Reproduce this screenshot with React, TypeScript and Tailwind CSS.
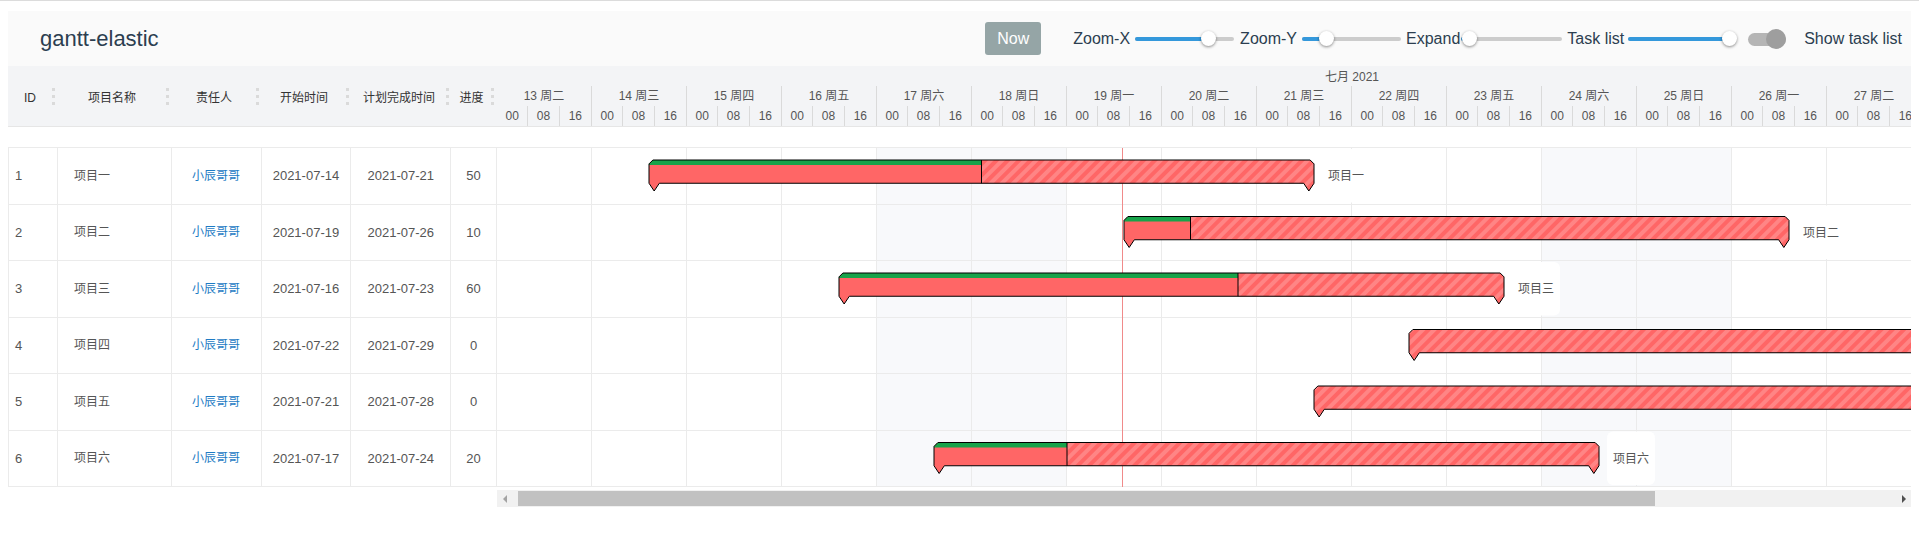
import React from 'react';

const DAY_W = 95;
const ROW_H = 56.5;
const BAR_W = 665;
const BAR_H = 31;
const VIEW_W = 1414;

const days = [
  { d: 13, w: '周二' },
  { d: 14, w: '周三' },
  { d: 15, w: '周四' },
  { d: 16, w: '周五' },
  { d: 17, w: '周六' },
  { d: 18, w: '周日' },
  { d: 19, w: '周一' },
  { d: 20, w: '周二' },
  { d: 21, w: '周三' },
  { d: 22, w: '周四' },
  { d: 23, w: '周五' },
  { d: 24, w: '周六' },
  { d: 25, w: '周日' },
  { d: 26, w: '周一' },
  { d: 27, w: '周二' },
];

const tasks = [
  { id: 1, name: '项目一', start: '2021-07-14', end: '2021-07-21', progress: 50 },
  { id: 2, name: '项目二', start: '2021-07-19', end: '2021-07-26', progress: 10 },
  { id: 3, name: '项目三', start: '2021-07-16', end: '2021-07-23', progress: 60 },
  { id: 4, name: '项目四', start: '2021-07-22', end: '2021-07-29', progress: 0 },
  { id: 5, name: '项目五', start: '2021-07-21', end: '2021-07-28', progress: 0 },
  { id: 6, name: '项目六', start: '2021-07-17', end: '2021-07-24', progress: 20 },
];

const barX = (start: string) => (Number(start.slice(8)) - 13) * DAY_W + 57;

function Slider({ width, value }: { width: number; value: number }) {
  return (
    <div className="relative h-[16px] shrink-0" style={{ width }}>
      <div className="absolute left-0 right-0 top-[6px] h-[4px] rounded-full bg-[#cccccc]" />
      <div className="absolute left-0 top-[6px] h-[4px] rounded-full bg-[#3498db]" style={{ width: value }} />
      <div
        className="absolute top-0 h-[15px] w-[15px] rounded-full bg-white shadow-[0_1px_3px_rgba(0,0,0,0.45)]"
        style={{ left: value - 7.5 }}
      />
    </div>
  );
}

function Resizer() {
  return (
    <div className="absolute right-[3px] top-[22px] flex flex-col gap-[4px]">
      <div className="h-[3px] w-[3px] bg-[#dadada]" />
      <div className="h-[3px] w-[3px] bg-[#dadada]" />
      <div className="h-[3px] w-[3px] bg-[#dadada]" />
    </div>
  );
}

const cols = [
  { label: 'ID', w: 'w-[50px]' },
  { label: '项目名称', w: 'w-[114px]' },
  { label: '责任人', w: 'w-[90px]' },
  { label: '开始时间', w: 'w-[90px]' },
  { label: '计划完成时间', w: 'w-[100px]' },
  { label: '进度', w: 'w-[45px]' },
];

function TaskBar({ x, y, progress }: { x: number; y: number; progress: number }) {
  const h = BAR_H;
  const w = BAR_W;
  const bottom = h * 0.75;
  const corner = h / 6;
  const small = h / 8;
  const d = `M ${small} 0 L ${w - small} 0 L ${w} ${small} L ${w} ${bottom} L ${w - corner} ${h} L ${w - corner * 2} ${bottom} L ${corner * 2} ${bottom} L ${corner} ${h} L 0 ${bottom} L 0 ${small} Z`;
  const pw = (w * progress) / 100;
  const clipId = `clip-${x}-${Math.round(y)}`;
  return (
    <g transform={`translate(${x} ${y})`}>
      <defs>
        <clipPath id={clipId}>
          <path d={d} />
        </clipPath>
      </defs>
      <g clipPath={`url(#${clipId})`}>
        <rect x={0} y={0} width={w} height={h} fill="#ff6666" />
        <rect x={pw} y={0} width={w - pw} height={h} fill="url(#hatch)" />
        {progress > 0 && <rect x={0} y={0} width={pw} height={5} fill="#17a34a" />}
      </g>
      {progress > 0 && <line x1={pw} y1={0} x2={pw} y2={bottom} stroke="#000" strokeWidth={1} />}
      <path d={d} fill="none" stroke="#000" strokeWidth={1} />
    </g>
  );
}

export default function App() {
  const chartH = ROW_H * tasks.length;
  return (
    <div className="relative h-[548px] w-[1919px] overflow-hidden bg-white font-['Liberation_Sans','Noto_Sans_CJK_SC',sans-serif]">
      <div className="h-px bg-[#dcdcdc]" />
      <div className="ml-2 mt-[10px] w-[1903px]">
        {/* top bar */}
        <div className="flex h-[55px] items-center bg-[#fafafa] pr-[9px] text-[16px] text-[#2c3e50]">
          <div className="pl-8 text-[22px] leading-none">gantt-elastic</div>
          <div className="flex-1" />
          <button className="h-[33px] w-[56px] rounded-[3px] bg-[#95a5a6] text-[16px] text-white">Now</button>
          <span className="ml-[32px]">Zoom-X</span>
          <div className="ml-[5px]"><Slider width={99} value={73} /></div>
          <span className="ml-[6px]">Zoom-Y</span>
          <div className="ml-[5px]"><Slider width={99} value={24} /></div>
          <span className="ml-[5px]">Expand</span>
          <div className="ml-[1px]"><Slider width={101} value={8} /></div>
          <span className="ml-[5px]">Task list</span>
          <div className="ml-[4px]"><Slider width={108} value={101} /></div>
          <div className="relative ml-[12px] h-[20px] w-[38px]">
            <div className="absolute left-0 right-0 top-[4px] h-[13px] rounded-full bg-[#b5b5b5]" />
            <div className="absolute left-[18px] top-0 h-[20px] w-[20px] rounded-full bg-[#9e9e9e]" />
          </div>
          <span className="ml-[18px]">Show task list</span>
        </div>

        {/* column header */}
        <div className="flex h-[61px] border-b border-[#e6e6e6] bg-[#f3f4f6]">
          <div className="flex w-[489px] shrink-0 text-[12px] text-[#333]">
            {cols.map((c) => (
              <div key={c.label} className={`relative flex items-center justify-center pr-[6px] pt-[4px] ${c.w}`}>
                {c.label}
                <Resizer />
              </div>
            ))}
          </div>
          <div className="flex-1 overflow-hidden text-[12px] text-[#555]">
            <div className="h-[20px] pl-[828px] pt-[3px] leading-[16px]">七月 2021</div>
            <div className="flex w-[1425px]">
              {days.map((day) => (
                <div key={day.d} className="w-[95px] shrink-0 border-r border-[#dadada]">
                  <div className="flex h-[20px] items-center justify-center">
                    {day.d} {day.w}
                  </div>
                  <div className="grid h-[20px] grid-cols-3">
                    {['00', '08', '16'].map((h, i) => (
                      <div
                        key={h}
                        className={`flex items-center justify-center ${i < 2 ? 'border-r border-[#dadada]' : ''}`}
                      >
                        {h}
                      </div>
                    ))}
                  </div>
                </div>
              ))}
            </div>
          </div>
        </div>

        {/* body */}
        <div className="mt-[20px] flex border-t border-[#ebebeb]">
          <div className="w-[489px] shrink-0 border-l border-[#ebebeb] text-[12px] text-[#555]">
            {tasks.map((t) => (
              <div key={t.id} className="flex h-[56.5px] border-b border-[#ebebeb]">
                <div className="flex w-[49px] items-center border-r border-[#ebebeb] pl-[6px] text-[13px]">{t.id}</div>
                <div className="flex w-[114px] items-center border-r border-[#ebebeb] pl-[16px]">{t.name}</div>
                <div className="flex w-[90px] items-center justify-center border-r border-[#ebebeb] text-[#1e7bc4]">
                  小辰哥哥
                </div>
                <div className="flex w-[90px] items-center justify-center border-r border-[#ebebeb] text-[13px]">
                  {t.start}
                </div>
                <div className="flex w-[100px] items-center justify-center border-r border-[#ebebeb] text-[13px]">
                  {t.end}
                </div>
                <div className="flex w-[46px] items-center justify-center border-r border-[#ebebeb] text-[13px]">
                  {t.progress}
                </div>
              </div>
            ))}
          </div>
          <div className="flex-1 overflow-hidden">
            <svg width={VIEW_W} height={chartH} className="block">
              <defs>
                <pattern id="hatch" patternUnits="userSpaceOnUse" width="8" height="8" patternTransform="rotate(45)">
                  <rect width="8" height="8" fill="#ff6666" />
                  <rect width="4" height="8" fill="#ff8585" />
                </pattern>
              </defs>
              <rect x={4 * DAY_W} y={0} width={2 * DAY_W} height={chartH} fill="#f8f9fb" />
              <rect x={11 * DAY_W} y={0} width={2 * DAY_W} height={chartH} fill="#f8f9fb" />
              {days.map((_, i) => (
                <line
                  key={i}
                  x1={(i + 1) * DAY_W - 0.5}
                  y1={0}
                  x2={(i + 1) * DAY_W - 0.5}
                  y2={chartH}
                  stroke="#ebebeb"
                />
              ))}
              {tasks.map((_, i) => (
                <line
                  key={i}
                  x1={0}
                  y1={Math.round((i + 1) * ROW_H) - 0.5}
                  x2={VIEW_W}
                  y2={Math.round((i + 1) * ROW_H) - 0.5}
                  stroke="#ebebeb"
                />
              ))}
              <line x1={625.5} y1={0} x2={625.5} y2={chartH} stroke="#f08a8a" />
              {tasks.map((t, i) => {
                const x = barX(t.start);
                const y = i * ROW_H + 12;
                const labelX = x + BAR_W + 8;
                return (
                  <g key={t.id}>
                    {labelX + 48 < VIEW_W && (
                      <>
                        <rect x={labelX} y={i * ROW_H + 1} width={48} height={ROW_H - 3} rx={6} fill="#fff" />
                        <text x={labelX + 6} y={i * ROW_H + ROW_H / 2 + 4} fontSize={12} fill="#555">
                          {t.name}
                        </text>
                      </>
                    )}
                    <TaskBar x={x} y={y} progress={t.progress} />
                  </g>
                );
              })}
            </svg>
          </div>
        </div>

        {/* scrollbar */}
        <div className="mt-[3px] flex">
          <div className="w-[489px] shrink-0" />
          <div className="relative flex h-[17px] flex-1 items-center bg-[#f1f1f1]">
            <div className="ml-[6px] h-0 w-0 border-y-[4px] border-r-[4px] border-y-transparent border-r-[#a3a3a3]" />
            <div className="ml-[11px] h-[15px] w-[1137px] bg-[#c1c1c1]" />
            <div className="flex-1" />
            <div className="mr-[5px] h-0 w-0 border-y-[4px] border-l-[4px] border-y-transparent border-l-[#505050]" />
          </div>
        </div>
      </div>
    </div>
  );
}
